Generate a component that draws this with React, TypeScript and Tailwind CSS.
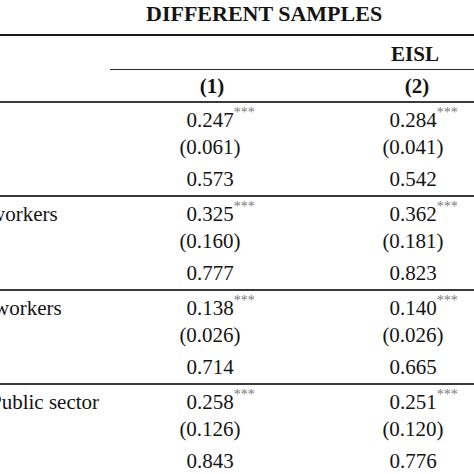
type Block = {
  label?: string;
  shift?: string;
  coef: [string, string];
  se: [string, string];
  fit: [string, string];
};

const BLOCKS: Block[] = [
  { coef: ["0.247", "0.284"], se: ["(0.061)", "(0.041)"], fit: ["0.573", "0.542"] },
  { label: "workers", shift: "-ml-[10px]", coef: ["0.325", "0.362"], se: ["(0.160)", "(0.181)"], fit: ["0.777", "0.823"] },
  { label: "workers", shift: "-ml-[6px]", coef: ["0.138", "0.140"], se: ["(0.026)", "(0.026)"], fit: ["0.714", "0.665"] },
  { label: "Public sector", shift: "-ml-[10px]", coef: ["0.258", "0.251"], se: ["(0.126)", "(0.120)"], fit: ["0.843", "0.776"] },
];

// stars hang off the right so the number itself stays centred
const Num = ({ v, stars }: { v: string; stars?: boolean }) => (
  <span className="relative">
    {v}
    {stars && (
      <span className="absolute left-full top-[-2px] text-[14px] leading-none text-[#7a7a7a]">***</span>
    )}
  </span>
);

const Row = ({ label, shift, vals, stars, extra }: { label?: string; shift?: string; vals: [string, string]; stars?: boolean; extra?: boolean }) => (
  <div className={`flex h-[27px] leading-[27px] ${extra ? "mt-[5px]" : ""}`}>
    <div className="w-[110px] overflow-hidden whitespace-nowrap">
      {label && <span className={`block ${shift ?? ""}`}>{label}</span>}
    </div>
    <div className="w-[200px] text-center">
      <Num v={vals[0]} stars={stars} />
    </div>
    <div className="w-[206px] text-center">
      <Num v={vals[1]} stars={stars} />
    </div>
  </div>
);

export default function App() {
  return (
    <div className="w-[474px] h-[474px] overflow-hidden bg-white text-[#141414] font-['Liberation_Serif','Times_New_Roman',serif]">
      <div className="w-[540px]">
        <div className="pt-[1px] pl-[146px] text-[22px] leading-[26px] font-bold">
          DIFFERENT SAMPLES
        </div>

        <div className="mt-[7px] border-t-2 border-[#1a1a1a]">
          <div className="flex mt-[6px] h-[24px] text-[21px] leading-[24px] font-bold">
            <div className="w-[110px]" />
            <div className="w-[200px]" />
            <div className="w-[210px] text-center">EISL</div>
          </div>
          <div className="ml-[110px] mt-[3px] border-t border-[#2a2a2a]">
            <div className="flex pt-[4px] h-[28px] text-[21px] leading-[24px] font-bold">
              <div className="w-[204px] text-center">(1)</div>
              <div className="w-[206px] text-center">(2)</div>
            </div>
          </div>
        </div>

        <div className="mt-[3px] text-[21px]">
          {BLOCKS.map((b, i) => (
            <div key={i} className="border-t-2 border-[#3a3a3a] pt-[4px] pb-[2px]">
              <Row label={b.label} shift={b.shift} vals={b.coef} stars />
              <Row vals={b.se} />
              <Row vals={b.fit} extra />
            </div>
          ))}
        </div>
      </div>
    </div>
  );
}
